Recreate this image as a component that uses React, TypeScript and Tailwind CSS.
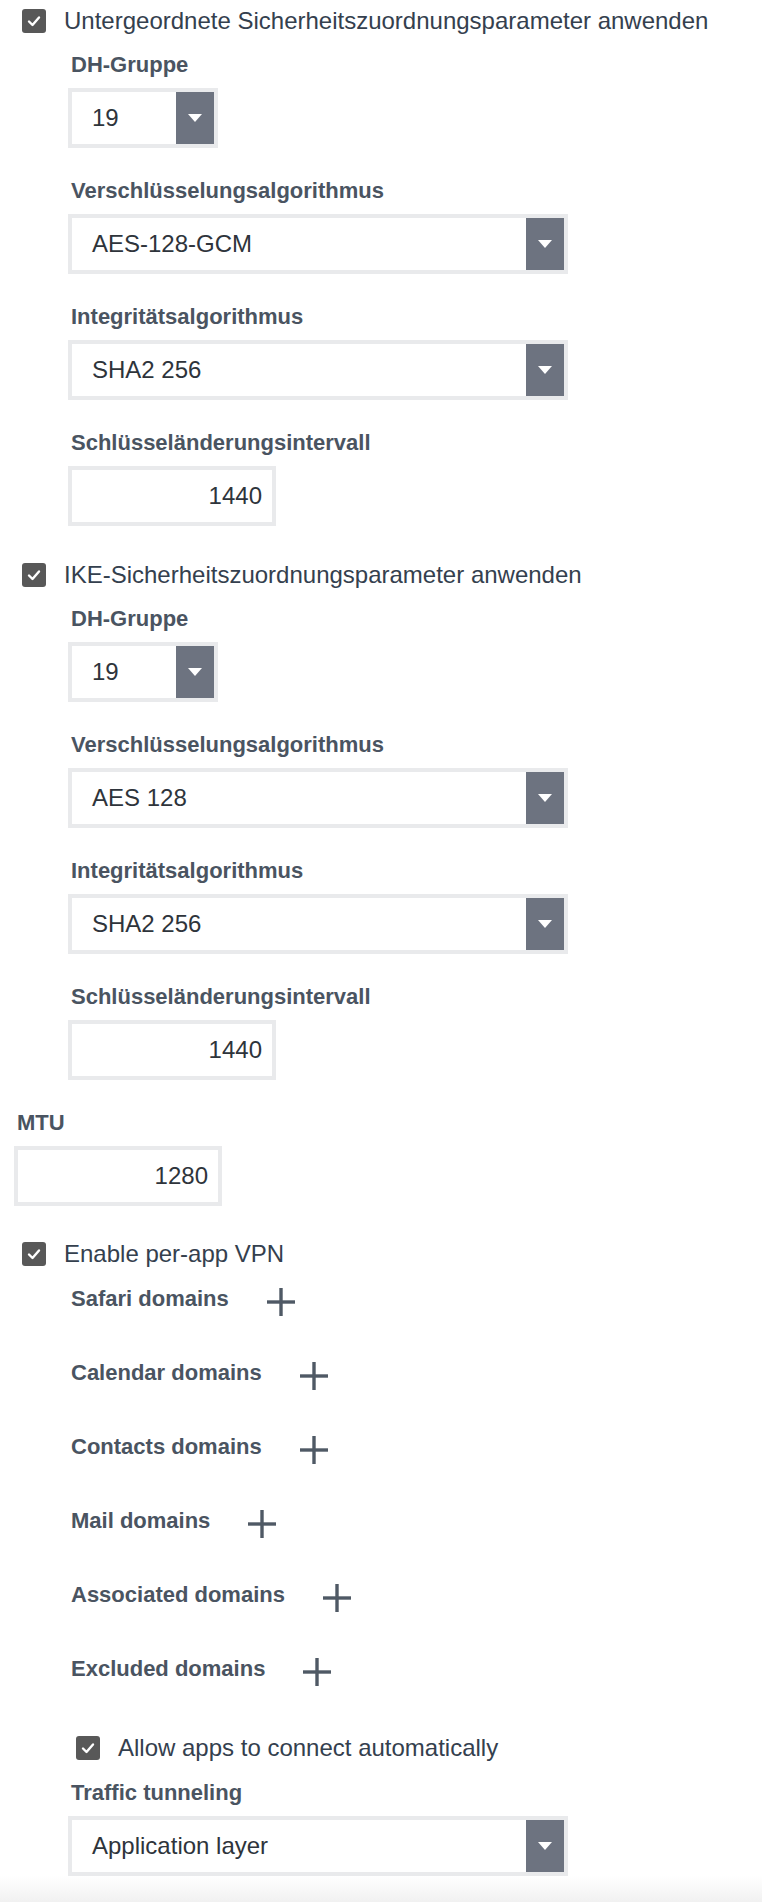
import React from "react";

const FONT = { fontFamily: '"Liberation Sans", Arial, Helvetica, sans-serif' };

function Check() {
  return (
    <div className="flex h-[24px] w-[24px] shrink-0 items-center justify-center rounded-[3px] bg-[#585858]">
      <svg width="16" height="16" viewBox="0 0 16 16">
        <polyline points="3,8.5 6.5,12 13,4.5" fill="none" stroke="#ffffff" strokeWidth="2.4" strokeLinecap="round" strokeLinejoin="round" />
      </svg>
    </div>
  );
}

function CheckRow({ text }: { text: string }) {
  return (
    <div className="flex h-10 items-center gap-[18px] pl-[8px]">
      <Check />
      <span className="text-[24px] leading-[28px] text-[#34404e]">{text}</span>
    </div>
  );
}

function Label({ children }: { children: React.ReactNode }) {
  return <div className="pl-[3px] text-[22px] font-bold leading-[26px] text-[#4a5461]">{children}</div>;
}

function Select({ value, w }: { value: string; w: string }) {
  return (
    <div className={`mt-[10px] flex h-[60px] border-4 border-[#e9eaec] bg-white ${w}`}>
      <div className="flex flex-1 items-center pl-[20px] text-[24px] text-[#2e343b]">{value}</div>
      <div className="flex w-[38px] items-center justify-center bg-[#6d7380]">
        <svg width="16" height="10" viewBox="0 0 16 10">
          <polygon points="1,1 15,1 8,9" fill="#ffffff" />
        </svg>
      </div>
    </div>
  );
}

function NumInput({ value }: { value: string }) {
  return (
    <div className="mt-[10px] flex h-[60px] w-[208px] items-center justify-end border-4 border-[#e9eaec] bg-white pr-[10px] text-[24px] text-[#2e343b]">
      {value}
    </div>
  );
}

function Plus() {
  return (
    <svg className="ml-[38px] mt-[2px] shrink-0" width="28" height="28" viewBox="0 0 28 28">
      <line x1="0" y1="14" x2="28" y2="14" stroke="#4f5965" strokeWidth="3.4" />
      <line x1="14" y1="0" x2="14" y2="28" stroke="#4f5965" strokeWidth="3.4" />
    </svg>
  );
}

function DomainRow({ label, last }: { label: string; last?: boolean }) {
  return (
    <div className={`flex items-start ${last ? "h-[72px]" : "h-[74px]"}`}>
      <Label>{label}</Label>
      <Plus />
    </div>
  );
}

function SaSection({ title, enc }: { title: string; enc: string }) {
  return (
    <>
      <CheckRow text={title} />
      <div className="pl-[54px]">
        <div className="mt-[11px]">
          <Label>DH-Gruppe</Label>
          <Select value="19" w="w-[150px]" />
        </div>
        <div className="mt-[30px]">
          <Label>Verschlüsselungsalgorithmus</Label>
          <Select value={enc} w="w-[500px]" />
        </div>
        <div className="mt-[30px]">
          <Label>Integritätsalgorithmus</Label>
          <Select value="SHA2 256" w="w-[500px]" />
        </div>
        <div className="mt-[30px]">
          <Label>Schlüsseländerungsintervall</Label>
          <NumInput value="1440" />
        </div>
      </div>
    </>
  );
}

export default function App() {
  return (
    <div className="min-h-[1902px] w-full bg-white" style={FONT}>
      <div className="pl-[14px] pt-[1px]">
        <SaSection title="Untergeordnete Sicherheitszuordnungsparameter anwenden" enc="AES-128-GCM" />
        <div className="mt-[29px]">
          <SaSection title="IKE-Sicherheitszuordnungsparameter anwenden" enc="AES 128" />
        </div>
        <div className="mt-[30px]">
          <Label>MTU</Label>
          <NumInput value="1280" />
        </div>
        <div className="mt-[28px]">
          <CheckRow text="Enable per-app VPN" />
        </div>
        <div className="pl-[54px]">
          <div className="mt-[12px]">
            <DomainRow label="Safari domains" />
            <DomainRow label="Calendar domains" />
            <DomainRow label="Contacts domains" />
            <DomainRow label="Mail domains" />
            <DomainRow label="Associated domains" />
            <DomainRow label="Excluded domains" last />
          </div>
          <CheckRow text="Allow apps to connect automatically" />
          <div className="mt-[12px]">
            <Label>Traffic tunneling</Label>
            <Select value="Application layer" w="w-[500px]" />
          </div>
        </div>
      </div>
      <div className="h-[26px] w-full bg-gradient-to-b from-[#ffffff] to-[#f1f1f1]" />
    </div>
  );
}
